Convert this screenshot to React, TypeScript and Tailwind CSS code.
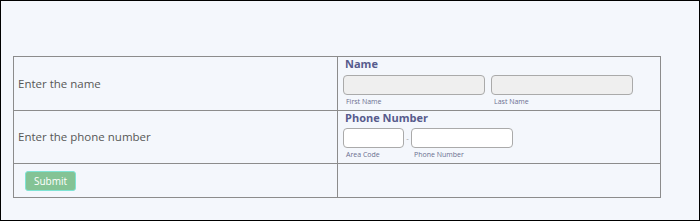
export default function App() {
  return (
    <div
      className="w-[700px] h-[221px] border border-black bg-[#f4f7fc] pt-[55px] pl-[12px]"
      style={{ fontFamily: '"Open Sans", "Liberation Sans", sans-serif' }}
    >
      <table className="w-[648px] border-collapse border border-[#8c8c8c] text-[#575757]">
        <tbody>
          <tr className="h-[54px]">
            <td className="w-[324px] border border-[#8c8c8c] pl-[4px] text-[11.5px]">Enter the name</td>
            <td className="border border-[#8c8c8c] pl-[5px] align-top">
              <div className="text-[11px] font-bold leading-[13px] pl-[2px] text-[#575b8d]">Name</div>
              <div className="flex gap-[6px] mt-[5px]">
                <div className="flex flex-col">
                  <input className="w-[142px] h-[20px] rounded-[4px] border border-[#aaa] bg-[#efefef]" />
                  <span className="text-[7px] leading-[10px] mt-[2px] pl-[3px] text-[#6b6f90]">First Name</span>
                </div>
                <div className="flex flex-col">
                  <input className="w-[142px] h-[20px] rounded-[4px] border border-[#aaa] bg-[#efefef]" />
                  <span className="text-[7px] leading-[10px] mt-[2px] pl-[3px] text-[#6b6f90]">Last Name</span>
                </div>
              </div>
            </td>
          </tr>
          <tr className="h-[53px]">
            <td className="border border-[#8c8c8c] pl-[4px] text-[11.5px]">Enter the phone number</td>
            <td className="border border-[#8c8c8c] pl-[5px] align-top">
              <div className="text-[11px] font-bold leading-[13px] pl-[2px] text-[#575b8d]">Phone Number</div>
              <div className="flex mt-[4px]">
                <div className="flex flex-col">
                  <input className="w-[61px] h-[20px] rounded-[4px] border border-[#aaa] bg-white" />
                  <span className="text-[7px] leading-[10px] mt-[2px] pl-[3px] text-[#6b6f90]">Area Code</span>
                </div>
                <span className="w-[7px] h-[20px] flex items-center justify-center text-[8px] text-[#999]">-</span>
                <div className="flex flex-col">
                  <input className="w-[102px] h-[20px] rounded-[4px] border border-[#aaa] bg-white" />
                  <span className="text-[7px] leading-[10px] mt-[2px] pl-[3px] text-[#6b6f90]">Phone Number</span>
                </div>
              </div>
            </td>
          </tr>
          <tr className="h-[34px]">
            <td className="border border-[#8c8c8c] pl-[11px] align-top pt-[7px]">
              <button className="block w-[51px] h-[20px] rounded-[3px] border border-[#7fe3d4] bg-[#84c395] text-white text-[10px] leading-none">
                Submit
              </button>
            </td>
            <td className="border border-[#8c8c8c]"></td>
          </tr>
        </tbody>
      </table>
    </div>
  )
}
